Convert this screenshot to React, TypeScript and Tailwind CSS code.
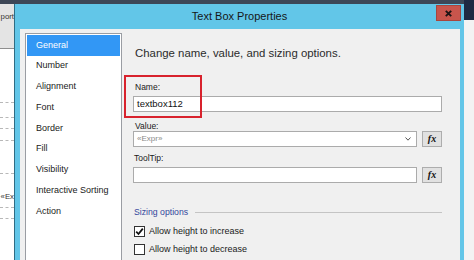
const navItems = [
  "General",
  "Number",
  "Alignment",
  "Font",
  "Border",
  "Fill",
  "Visibility",
  "Interactive Sorting",
  "Action",
];

function FxButton() {
  return (
    <div className="ml-[5px] flex h-[16px] w-[20px] items-center justify-center border border-[#adadad] bg-[#e1e1e1]">
      <span className="font-['Liberation_Serif',serif] text-[10px] leading-none font-bold italic text-[#111]">fx</span>
    </div>
  );
}

function CheckRow({ checked, label }: { checked: boolean; label: string }) {
  return (
    <div className="flex h-[12px] items-center">
      <div className="flex h-[11px] w-[11px] items-center justify-center border border-[#333] bg-white">
        {checked && (
          <svg width="9" height="9" viewBox="0 0 9 9">
            <path d="M1.2 4.6 L3.5 7 L7.8 1.6" fill="none" stroke="#111" strokeWidth="1.8" />
          </svg>
        )}
      </div>
      <span className="ml-[4px] text-[9px] leading-[12px] text-[#1a1a1a]">{label}</span>
    </div>
  );
}

function BackgroundLeft() {
  const dashes = [102, 117, 128, 140, 173, 207, 218];
  return (
    <div className="relative h-full w-[14px] overflow-hidden bg-white">
      <div className="h-[4px] bg-[#3d4757]" />
      <div className="flex h-[45px] flex-col border-b border-[#8e8e8e] bg-[#e4e4e4]">
        <div className="mt-[8px] flex h-[10px] justify-end text-[7.8px] leading-[10px] text-[#333]">
          <span className="whitespace-nowrap">port</span>
        </div>
      </div>
      {dashes.map((y) => (
        <div key={y} className="absolute left-0 w-[14px] border-t border-dashed border-[#b8b8b8]" style={{ top: y }} />
      ))}
      <div className="absolute top-[192px] left-0 flex w-[14px] justify-end text-[7.8px] leading-[10px] text-[#333]">
        <span className="whitespace-nowrap">«Ex</span>
      </div>
    </div>
  );
}

export default function App() {
  return (
    <div className="relative flex h-[260px] w-[474px] overflow-hidden bg-white font-['Liberation_Sans',Arial,sans-serif]">
      <BackgroundLeft />

      <div className="flex h-full w-[450px] flex-col bg-[#3d4757] pt-[4px]">
        <div className="relative flex flex-1 flex-col border-l border-[#2f6d84] bg-[#62c6e8]">
          <div className="flex h-[25px] items-center justify-center text-[11px] text-[#161616]">Text Box Properties</div>
          <div className="absolute top-[1px] right-[3px] flex h-[16px] w-[25px] items-center justify-center border border-[#a8463e] bg-[#c8554c]">
            <svg width="7" height="7" viewBox="0 0 7 7">
              <path d="M0.8 0.8 L6.2 6.2 M6.2 0.8 L0.8 6.2" stroke="#1d1414" strokeWidth="1.9" />
            </svg>
          </div>

          <div className="mr-[4px] ml-[5px] flex flex-1 bg-[#f0f0f0]">
            <div className="mt-[4px] ml-[5px] h-[240px] w-[97px] border border-[#9a9da3] bg-white p-[1px]">
              {navItems.map((item, i) => (
                <div
                  key={item}
                  className={
                    i === 0
                      ? "flex h-[20.75px] items-center bg-[#3297f5] pl-[9px] text-[9px] text-white"
                      : "flex h-[20.75px] items-center pl-[9px] text-[9px] text-[#1a1a1a]"
                  }
                >
                  {item}
                </div>
              ))}
            </div>

            <div className="ml-[11px] flex w-[309px] flex-col">
              <div className="mt-[17px] ml-[2px] h-[14px] text-[11.4px] leading-[14px] whitespace-nowrap text-[#2b2b2b]">
                Change name, value, and sizing options.
              </div>

              <div className="mt-[22px] ml-[2px] h-[10px] text-[8.5px] leading-[10px] text-[#1a1a1a]">Name:</div>
              <div className="mt-[4px] flex h-[16px] items-center border border-[#ababab] bg-white pl-[3px] text-[9.5px] text-[#111]">
                textbox112
              </div>

              <div className="mt-[9px] ml-[2px] h-[10px] text-[8.5px] leading-[10px] text-[#1a1a1a]">Value:</div>
              <div className="flex h-[16px] items-center">
                <div className="flex h-[16px] flex-1 items-center justify-between border border-[#ababab] bg-white pr-[5px] pl-[3px]">
                  <span className="text-[8px] text-[#8a8a8a]">«Expr»</span>
                  <svg width="6" height="4" viewBox="0 0 6 4">
                    <path d="M0.5 0.5 L3 3.2 L5.5 0.5" fill="none" stroke="#555" strokeWidth="1" />
                  </svg>
                </div>
                <FxButton />
              </div>

              <div className="mt-[6px] ml-[1px] h-[10px] text-[8.5px] leading-[10px] text-[#1a1a1a]">ToolTip:</div>
              <div className="mt-[4px] flex h-[16px] items-center">
                <div className="h-[16px] flex-1 border border-[#ababab] bg-white" />
                <FxButton />
              </div>

              <div className="mt-[23px] ml-[1px] flex h-[12px] items-center">
                <span className="text-[8.7px] leading-[12px] whitespace-nowrap text-[#33479c]">Sizing options</span>
                <div className="ml-[7px] h-px flex-1 bg-[#c4c4c4]" />
              </div>

              <div className="mt-[7px] ml-[1px]">
                <CheckRow checked label="Allow height to increase" />
              </div>
              <div className="mt-[6px] ml-[1px]">
                <CheckRow checked={false} label="Allow height to decrease" />
              </div>
            </div>
          </div>
        </div>
      </div>

      <div className="flex h-full flex-1 flex-col">
        <div className="h-[20px] bg-[#1e2a43]" />
        <div className="flex-1 bg-[#f3f3f3]" />
      </div>

      <div className="absolute top-[75px] left-[124px] h-[43px] w-[78px] border-2 border-[#d8222d]" />
    </div>
  );
}
